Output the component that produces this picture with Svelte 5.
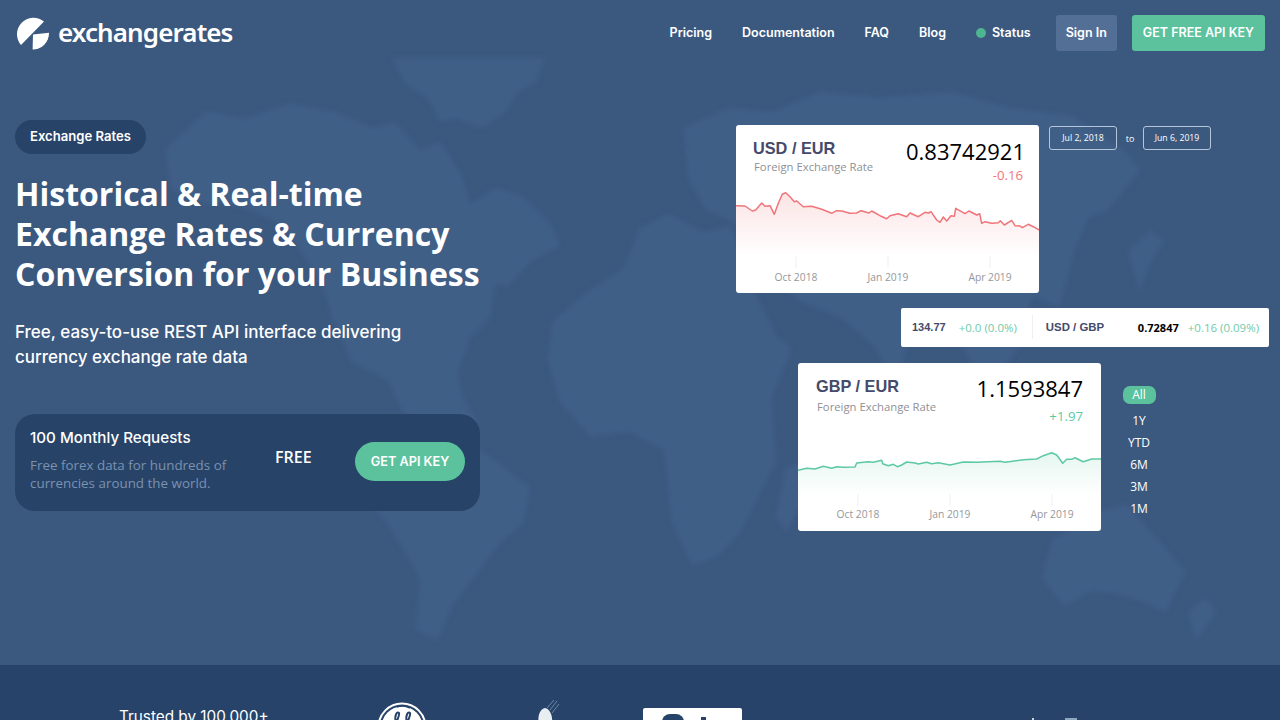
<script>
  const redPoints = [[32,272],[60,273],[82,288],[92,285],[110,264],[120,274],[135,272],[148,298],[160,265],[172,238],[182,233],[195,245],[208,260],[215,258],[235,275],[260,274],[290,283],[320,295],[335,287],[350,288],[375,295],[395,294],[408,287],[432,294],[440,288],[465,302],[485,311],[495,302],[520,296],[545,305],[555,294],[580,305],[600,292],[610,294],[618,290],[635,315],[645,322],[655,306],[665,318],[678,302],[688,304],[692,280],[720,296],[732,288],[755,300],[764,296],[770,325],[780,320],[800,325],[820,323],[826,317],[838,330],[860,316],[870,332],[885,333],[892,338],[910,328],[925,335],[943,345]];
  const greenPoints = [[24,346],[50,340],[75,342],[100,334],[125,340],[140,335],[160,337],[195,336],[200,324],[235,320],[250,322],[275,316],[278,326],[295,332],[310,328],[322,335],[335,330],[350,321],[375,324],[385,327],[410,322],[425,326],[445,323],[480,330],[520,321],[560,322],[630,319],[645,322],[700,314],[740,312],[760,302],[785,293],[800,300],[818,325],[830,313],[845,313],[855,308],[880,320],[905,312],[935,312]];

  // points were read off 3x crops, so bring them back to chart coordinates
  const toLine = (pts, dx, dy) => pts.map(([x, y]) => `${(x / 3 - dx).toFixed(1)},${(y / 3 - dy).toFixed(1)}`).join(" ");
  const toArea = (line) => `0,72 ${line} 303,72`;

  const charts = {
    red: { pair: "USD / EUR", rate: "0.83742921", change: "-0.16", id: "fade-red", color: "#f0757a", fade: 0.2, labelY: 96, alt: false, line: toLine(redPoints, 11, 70) },
    green: { pair: "GBP / EUR", rate: "1.1593847", change: "+1.97", id: "fade-green", color: "#5cc9a3", fade: 0.16, labelY: 95, alt: true, line: toLine(greenPoints, 8, 68) }
  };
  const ticks = [{ x: 60, label: "Oct 2018" }, { x: 152, label: "Jan 2019" }, { x: 254, label: "Apr 2019" }];
  const navLinks = ["Pricing", "Documentation", "FAQ", "Blog"];
  const ranges = ["1Y", "YTD", "6M", "3M", "1M"];
</script>

{#snippet chartCard(c)}
  <div class="chart-card" class:alt={c.alt}>
    <div class="chart-head">
      <div>
        <div class="pair">{c.pair}</div>
        <div class="caption">Foreign Exchange Rate</div>
      </div>
      <div class="rate-box">
        <div class="rate">{c.rate}</div>
        <div class="change" style="color: {c.color}">{c.change}</div>
      </div>
    </div>
    <svg class="plot" viewBox="0 0 303 108" width="303" height="108">
      <defs>
        <linearGradient id={c.id} x1="0" y1="0" x2="0" y2="1">
          <stop offset="0" stop-color={c.color} stop-opacity={c.fade} />
          <stop offset="1" stop-color={c.color} stop-opacity="0" />
        </linearGradient>
      </defs>
      <polygon points={toArea(c.line)} fill="url(#{c.id})" />
      <polyline points={c.line} fill="none" stroke={c.color} stroke-width="1.5" stroke-linejoin="round" />
      {#each ticks as t}
        <line x1={t.x} x2={t.x} y1="71" y2="83" stroke="#eeeff1" />
        <text x={t.x} y={c.labelY} text-anchor="middle">{t.label}</text>
      {/each}
    </svg>
  </div>
{/snippet}

<div class="page">
  <svg class="world" viewBox="0 0 1280 665" width="1280" height="665" aria-hidden="true">
    <defs>
      <filter id="soft"><feGaussianBlur stdDeviation="2.5" /></filter>
    </defs>
    <g fill="#3f5e87" filter="url(#soft)">
      <path d="M392 58 L545 58 L536 82 L518 92 L505 112 L482 128 L455 118 L440 122 L428 98 L405 84Z" />
      <path d="M165 150 L205 112 L245 118 L290 104 L335 112 L372 128 L395 122 L420 150 L440 142 L462 176 L470 205 L495 188 L522 196 L552 226 L560 246 L530 262 L508 286 L496 284 L490 318 L470 338 L458 372 L462 396 L478 424 L452 434 L428 420 L404 414 L388 380 L352 362 L332 318 L325 292 L302 252 L278 222 L240 206 L205 204 L172 190Z" />
      <path d="M428 436 L462 438 L492 458 L530 488 L524 522 L498 545 L478 572 L452 606 L438 640 L416 630 L420 578 L392 530 L366 496 L378 462 L402 448Z" />
      <path d="M552 322 L590 290 L624 268 L640 228 L668 214 L704 232 L730 226 L752 286 L778 338 L792 348 L772 396 L776 462 L742 530 L718 556 L692 566 L672 522 L664 450 L630 432 L590 436 L560 402 L548 362Z" />
      <path d="M684 128 L728 108 L772 112 L820 92 L880 98 L950 92 L1010 108 L1072 116 L1126 152 L1140 170 L1108 210 L1088 218 L1074 252 L1060 306 L1032 296 L1018 348 L1000 372 L986 388 L962 346 L934 326 L912 332 L896 382 L872 344 L842 318 L802 302 L764 272 L742 226 L706 210 L688 178Z" />
      <path d="M1052 540 L1084 522 L1104 510 L1126 504 L1142 522 L1186 572 L1166 612 L1128 596 L1092 590 L1064 606 L1042 578Z" />
      <path d="M1128 252 L1150 230 L1164 240 L1148 268 L1140 292Z" />
      <path d="M786 468 L800 464 L802 504 L786 532 L776 516Z" />
      <path d="M1188 612 L1206 598 L1216 612 L1196 640Z" />
    </g>
  </svg>

  <header class="topbar">
    <div class="brand">
      <svg viewBox="0 0 34 34" width="34" height="34" aria-hidden="true">
        <path d="M6 29 A16.5 16.5 0 0 1 29 5.5Z" fill="#fff" />
        <path d="M18 18.5 L34 16.8 A16.5 16.5 0 0 1 17.6 33.6Z" fill="#fff" />
      </svg>
      <span class="brand-name">exchangerates</span>
    </div>
    <nav class="nav">
      {#each navLinks as link}
        <span class="nav-link">{link}</span>
      {/each}
      <span class="nav-link status"><i class="dot"></i>Status</span>
      <span class="btn sign-in">Sign In</span>
      <span class="btn free-key">GET FREE API KEY</span>
    </nav>
  </header>

  <main class="hero">
    <section class="intro">
      <span class="pill">Exchange Rates</span>
      <h1>Historical &amp; Real-time<br />Exchange Rates &amp; Currency<br />Conversion for your Business</h1>
      <p class="lead">Free, easy-to-use REST API interface delivering<br />currency exchange rate data</p>
      <div class="plan">
        <div class="plan-text">
          <div class="plan-title">100 Monthly Requests</div>
          <div class="plan-desc">Free forex data for hundreds of<br />currencies around the world.</div>
        </div>
        <div class="plan-price">FREE</div>
        <span class="plan-btn">GET API KEY</span>
      </div>
    </section>

    <section class="demo">
      <div class="row-top">
        {@render chartCard(charts.red)}
        <div class="dates">
          <span class="date">Jul 2, 2018</span>
          <span class="to">to</span>
          <span class="date">Jun 6, 2019</span>
        </div>
      </div>

      <div class="ticker">
        <span class="t-val">134.77</span>
        <span class="t-up first">+0.0 (0.0%)</span>
        <i class="t-sep"></i>
        <span class="t-pair">USD / GBP</span>
        <span class="t-rate">0.72847</span>
        <span class="t-up">+0.16 (0.09%)</span>
      </div>

      <div class="row-bottom">
        {@render chartCard(charts.green)}
        <div class="ranges">
          <span class="range active">All</span>
          {#each ranges as r}
            <span class="range">{r}</span>
          {/each}
        </div>
      </div>
    </section>
  </main>

  <footer class="trusted">
    <div class="trusted-text">Trusted by 100,000+</div>
    <svg class="logo-ge" viewBox="0 0 50 50" width="50" height="50" aria-hidden="true">
      <circle cx="25" cy="25" r="23.5" fill="none" stroke="#fff" stroke-width="2" />
      <circle cx="25" cy="25" r="20.5" fill="#fff" />
      <path d="M20 5 C24 3 30 4 33 6" fill="none" stroke="#274369" stroke-width="1.6" />
      <path d="M19 20 C17 14 20 9 22 11 C23 14 19 20 18 24 M30 20 C28 14 31 9 33 11 C34 14 30 20 29 24" fill="none" stroke="#274369" stroke-width="2" />
    </svg>
    <svg class="logo-feather" viewBox="0 0 30 24" width="30" height="24" aria-hidden="true">
      <path d="M4 24 C2 16 5 9 10 8 C15 9 18 16 17 24Z" fill="#e8eef2" />
      <path d="M12 8 L19 0 M15 10 L22 1 M17 13 L24 4" stroke="#7f97b2" stroke-width="0.8" />
    </svg>
    <div class="logo-box"><i></i><i class="small"></i></div>
    <div class="logo-bits"><i></i><i class="wide"></i></div>
  </footer>
</div>

<style>
  :global(body) {
    overflow: hidden;
    background: #274369;
  }

  .page {
    position: relative;
    width: 1280px;
    height: 720px;
    overflow: hidden;
    background: #3b587f;
    color: #fff;
    font-family: "Inter", "Liberation Sans", sans-serif;
  }

  .world {
    position: absolute;
    top: 0;
    left: 0;
  }

  .topbar {
    position: relative;
    display: flex;
    align-items: center;
    justify-content: space-between;
    height: 66px;
    padding: 0 15px;
  }

  .brand {
    display: flex;
    align-items: center;
    gap: 9px;
    font-family: "Noto Sans", sans-serif;
    font-size: 26px;
    font-weight: 600;
    letter-spacing: -0.9px;
  }

  .brand-name {
    padding-bottom: 2px;
  }

  .nav {
    display: flex;
    align-items: center;
    font-size: 12.5px;
    font-weight: 600;
  }

  .nav-link {
    margin-right: 30px;
    padding-bottom: 1px;
  }

  .status {
    display: flex;
    align-items: center;
    gap: 6px;
    margin-right: 25px;
  }

  .dot {
    width: 10px;
    height: 10px;
    border-radius: 50%;
    background: #4db58f;
  }

  .btn {
    display: flex;
    align-items: center;
    height: 36px;
    padding: 0 10px 1px;
    box-sizing: border-box;
    border-radius: 3px;
  }

  .sign-in {
    background: #546f96;
    margin-right: 15px;
  }

  .free-key {
    padding: 0 11px 1px;
    background: #5bc29d;
  }

  .hero {
    position: relative;
    display: flex;
    height: 599px;
  }

  .intro {
    width: 736px;
    padding: 54px 0 0 15px;
    box-sizing: border-box;
    flex: none;
  }

  .pill {
    display: inline-block;
    height: 34px;
    line-height: 33px;
    padding: 0 15px;
    border-radius: 17px;
    background: #284368;
    font-size: 13.1px;
    font-weight: 600;
  }

  h1 {
    margin: 20px 0 0;
    font-family: "Open Sans", sans-serif;
    font-size: 32px;
    font-weight: 700;
    line-height: 40px;
  }

  .lead {
    margin: 26px 0 0;
    font-size: 17px;
    font-weight: 500;
    line-height: 25px;
  }

  .plan {
    display: flex;
    align-items: flex-start;
    width: 465px;
    height: 97px;
    margin-top: 44px;
    padding: 14px 15px 0;
    box-sizing: border-box;
    border-radius: 20px;
    background: #284368;
  }

  .plan-text {
    width: 245px;
    flex: none;
  }

  .plan-title {
    font-size: 15.2px;
    font-weight: 500;
    line-height: 20px;
  }

  .plan-desc {
    margin-top: 8px;
    color: #7a92b0;
    font-family: "Open Sans", sans-serif;
    font-size: 13.4px;
    line-height: 18px;
  }

  .plan-price {
    width: 80px;
    flex: none;
    padding-top: 19px;
    font-family: "Open Sans", sans-serif;
    font-size: 16px;
    font-weight: 600;
    line-height: 20px;
  }

  .plan-btn {
    display: flex;
    align-items: center;
    justify-content: center;
    width: 110px;
    height: 39px;
    margin-top: 14px;
    border-radius: 20px;
    background: #5bc29d;
    font-size: 12.7px;
    font-weight: 600;
  }

  .demo {
    padding-top: 59px;
  }

  .row-top,
  .row-bottom {
    display: flex;
    align-items: flex-start;
  }

  .chart-card {
    width: 303px;
    height: 168px;
    border-radius: 3px;
    background: #fff;
    overflow: hidden;
    flex: none;
  }

  .chart-head {
    display: flex;
    justify-content: space-between;
    height: 60px;
    padding: 13px 14px 0 17px;
    box-sizing: border-box;
  }

  .alt .chart-head {
    padding: 13px 18px 0 18px;
  }

  .pair {
    color: #454a6b;
    font-family: "Liberation Sans", sans-serif;
    font-size: 16.3px;
    font-weight: 700;
    line-height: 20px;
  }

  .caption {
    margin: 1px 0 0 1px;
    color: #8f9096;
    font-family: "Open Sans", sans-serif;
    font-size: 11.3px;
    line-height: 16px;
  }

  .alt .caption {
    margin-top: 3px;
  }

  .rate-box {
    text-align: right;
    font-family: "Open Sans", sans-serif;
  }

  .alt .rate-box {
    margin-top: -1px;
  }

  .rate {
    color: #000;
    font-size: 22px;
    line-height: 26px;
  }

  .change {
    margin: 2px 2px 0 0;
    font-size: 13.2px;
    line-height: 18px;
  }

  .alt .change {
    margin: 6px 0 0 0;
  }

  .plot {
    display: block;
  }

  .plot text {
    fill: #96979c;
    font-family: "Open Sans", sans-serif;
    font-size: 10.3px;
  }

  .dates {
    display: flex;
    align-items: center;
    margin: 1px 0 0 10px;
  }

  .date {
    display: flex;
    align-items: center;
    justify-content: center;
    width: 68px;
    height: 24px;
    box-sizing: border-box;
    border: 1px solid #b5c6da;
    border-radius: 3px;
    font-family: "Open Sans", sans-serif;
    font-size: 8.7px;
  }

  .to {
    width: 26px;
    text-align: center;
    font-family: "Open Sans", sans-serif;
    font-size: 9px;
  }

  .ticker {
    display: flex;
    align-items: center;
    width: 368px;
    height: 39px;
    margin: 15px 0 16px 165px;
    padding-bottom: 1px;
    box-sizing: border-box;
    border-radius: 2px;
    background: #fff;
    font-size: 11px;
    white-space: nowrap;
  }

  .t-val {
    margin-left: 11px;
    color: #454a6b;
    font-family: "Liberation Sans", sans-serif;
    font-weight: 700;
  }

  .t-up {
    margin-left: 9px;
    color: #6fcba9;
    font-family: "Open Sans", sans-serif;
    font-size: 11.5px;
  }

  .t-up.first {
    margin-left: 13px;
  }

  .t-sep {
    width: 1px;
    height: 24px;
    margin: 0 13px 0 15px;
    background: #eeeff1;
  }

  .t-pair {
    width: 92px;
    color: #454a6b;
    font-family: "Liberation Sans", sans-serif;
    font-size: 11.4px;
    font-weight: 700;
  }

  .t-rate {
    color: #000;
    font-family: "Open Sans", sans-serif;
    font-weight: 700;
  }

  .row-bottom {
    margin-left: 62px;
  }

  .ranges {
    display: flex;
    flex-direction: column;
    align-items: center;
    width: 34px;
    margin: 23px 0 0 21px;
    font-family: "Open Sans", sans-serif;
    font-size: 12px;
  }

  .range {
    height: 22px;
    line-height: 22px;
  }

  .active {
    width: 33px;
    height: 18px;
    margin-bottom: 6px;
    line-height: 18px;
    text-align: center;
    border-radius: 7px;
    background: #5bc29d;
  }

  .trusted {
    position: relative;
    display: flex;
    align-items: flex-start;
    height: 55px;
    background: #274369;
    overflow: hidden;
  }

  .trusted-text {
    width: 258px;
    margin: 42px 0 0 119px;
    font-size: 15.3px;
    flex: none;
  }

  .logo-ge {
    margin-top: 37px;
    flex: none;
  }

  .logo-feather {
    margin: 35px 0 0 108px;
    flex: none;
  }

  .logo-box {
    position: relative;
    width: 99px;
    height: 40px;
    margin: 43px 0 0 78px;
    border-radius: 2px;
    background: #fff;
    flex: none;
  }

  .logo-box i {
    position: absolute;
    top: 6px;
    left: 19px;
    width: 22px;
    height: 8px;
    border-radius: 14px 14px 0 0;
    background: #274369;
  }

  .logo-box i.small {
    top: 9px;
    left: 58px;
    width: 5px;
    height: 4px;
    border-radius: 0;
  }

  .logo-bits {
    display: flex;
    gap: 31px;
    margin: 53px 0 0 290px;
  }

  .logo-bits i {
    width: 2px;
    height: 2px;
    background: #c8d4e0;
  }

  .logo-bits i.wide {
    width: 12px;
    background: #8fa6c0;
  }
</style>
